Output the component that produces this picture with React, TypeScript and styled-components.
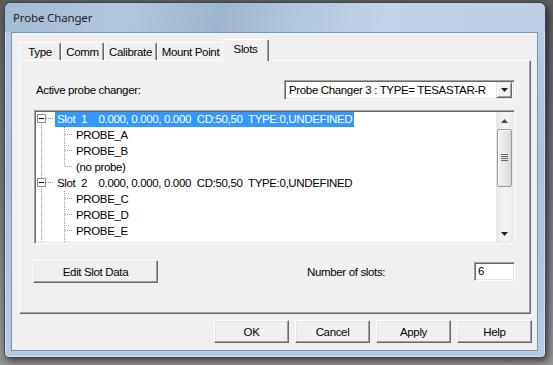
import React from "react";
import styled, { createGlobalStyle } from "styled-components";

const Global = createGlobalStyle`
  html, body { margin: 0; padding: 0; }
  body {
    width: 553px; height: 365px; overflow: hidden;
    font-family: "Liberation Sans", Arial, sans-serif;
    background: #7a7a7a;
  }
`;

const Screen = styled.div`
  width: 553px;
  height: 365px;
  box-sizing: border-box;
  padding: 2px 0 0 4px;
  background: linear-gradient(180deg, #5c5c5c 0%, #777 55%, #959595 100%);
`;

const Window = styled.div`
  width: 542px;
  height: 356px;
  box-sizing: border-box;
  border: 1px solid #3b4754;
  border-radius: 7px 7px 5px 5px;
  background: linear-gradient(180deg, #b9cde2 0%, #aac1d9 45%, #b6cbe0 100%);
  box-shadow: inset 0 0 0 1px rgba(255, 255, 255, 0.45), 2px 3px 7px rgba(0, 0, 0, 0.6);
  display: flex;
  flex-direction: column;
  overflow: hidden;
`;

const TitleBar = styled.div`
  height: 29px;
  flex: none;
  display: flex;
  align-items: center;
  padding-left: 8px;
  background: linear-gradient(
    100deg,
    #a3bbd4 0%,
    #b3c7dc 22%,
    #9db5ce 40%,
    #b0c5db 52%,
    #c1d3e6 70%,
    #bccfe3 100%
  );
`;

const Title = styled.span`
  font-family: "Noto Sans", "Open Sans", sans-serif;
  font-size: 11.5px;
  color: #1e1e1e;
  letter-spacing: -0.15px;
`;

const Client = styled.div`
  margin: 0 7px 0 6px;
  height: 319px;
  box-sizing: border-box;
  border: 1px solid #7f92a7;
  background: #f0f0f0;
  display: flex;
  flex-direction: column;
  font-size: 11.5px;
  letter-spacing: -0.35px;
  color: #000;
`;

const TabStrip = styled.div`
  height: 27px;
  flex: none;
  display: flex;
  align-items: flex-end;
  padding-left: 7px;
`;

const Tab = styled.div<{ $w: number; $active?: boolean }>`
  width: ${(p) => p.$w}px;
  height: ${(p) => (p.$active ? 22 : 18)}px;
  box-sizing: border-box;
  display: flex;
  align-items: center;
  justify-content: center;
  padding-bottom: ${(p) => (p.$active ? 3 : 0)}px;
  margin-left: ${(p) => (p.$active ? -2 : 0)}px;
  margin-bottom: ${(p) => (p.$active ? -1 : 0)}px;
  position: relative;
  z-index: ${(p) => (p.$active ? 2 : 0)};
  background: #f0f0f0;
  border-top: 1px solid #fff;
  border-left: 1px solid #fff;
  border-right: 1px solid #696969;
  border-radius: 2px 2px 0 0;
  box-shadow: inset -1px 0 0 #a0a0a0;
`;

const TabPage = styled.div`
  margin-left: 7px;
  width: 512px;
  height: 254px;
  box-sizing: border-box;
  border-style: solid;
  border-width: 1px;
  border-color: #fff #696969 #696969 #fff;
  box-shadow: inset -1px -1px 0 #a0a0a0;
  padding: 19px 15px 0 14px;
  display: flex;
  flex-direction: column;
`;

const ChangerRow = styled.div`
  height: 20px;
  display: flex;
  align-items: center;
  justify-content: space-between;
`;

const Label = styled.span<{ $indent?: number }>`
  margin-left: ${(p) => p.$indent ?? 0}px;
  white-space: pre;
`;

const Combo = styled.div`
  width: 231px;
  height: 20px;
  box-sizing: border-box;
  display: flex;
  align-items: center;
  background: #fff;
  border-style: solid;
  border-width: 1px;
  border-color: #a0a0a0 #fff #fff #a0a0a0;
  box-shadow: inset 1px 1px 0 #696969, inset -1px -1px 0 #e3e3e3;
  padding: 2px 2px 2px 4px;
`;

const ComboText = styled.span`
  flex: 1;
  white-space: pre;
`;

const ComboButton = styled.div`
  width: 16px;
  height: 16px;
  box-sizing: border-box;
  display: flex;
  align-items: center;
  justify-content: center;
  background: #f0f0f0;
  border-style: solid;
  border-width: 1px;
  border-color: #e3e3e3 #696969 #696969 #e3e3e3;
  box-shadow: inset 1px 1px 0 #fff, inset -1px -1px 0 #a0a0a0;
`;

const Tree = styled.div`
  margin-top: 10px;
  height: 134px;
  box-sizing: border-box;
  display: flex;
  background: #fff;
  border-style: solid;
  border-width: 1px;
  border-color: #a0a0a0 #fff #fff #a0a0a0;
  box-shadow: inset 1px 1px 0 #696969, inset -1px -1px 0 #e3e3e3;
  padding: 0 1px 1px 1px;
`;

const TreeBody = styled.div`
  flex: 1;
  overflow: hidden;
  padding-left: 1px;
`;

const TreeRow = styled.div`
  height: 16px;
  display: flex;
  align-items: center;
`;

const NodeLabel = styled.span<{ $selected?: boolean }>`
  height: 15px;
  line-height: 15px;
  padding: 0 2px;
  white-space: pre;
  background: ${(p) => (p.$selected ? "#3399ff" : "transparent")};
  color: ${(p) => (p.$selected ? "#fff" : "#000")};
`;

const ScrollBar = styled.div`
  width: 17px;
  flex: none;
  margin-top: 1px;
  display: flex;
  flex-direction: column;
  background: linear-gradient(90deg, #e6e6e6 0%, #f4f4f4 50%, #ececec 100%);
`;

const ScrollArrow = styled.div`
  height: 17px;
  flex: none;
  display: flex;
  align-items: center;
  justify-content: center;
`;

const ScrollTrack = styled.div`
  flex: 1;
`;

const Thumb = styled.div`
  margin: 0 1px;
  height: 58px;
  box-sizing: border-box;
  border: 1px solid #999;
  border-radius: 2px;
  background: linear-gradient(90deg, #f2f2f2 0%, #e8e8e8 50%, #d6d6d6 100%);
  box-shadow: inset 1px 1px 0 #fff;
  display: flex;
  align-items: center;
  justify-content: center;
`;

const ControlRow = styled.div`
  margin-top: 16px;
  display: flex;
  align-items: center;
`;

const Button = styled.button<{ $w: number }>`
  width: ${(p) => p.$w}px;
  height: 23px;
  box-sizing: border-box;
  padding: 0;
  font-family: "Liberation Sans", Arial, sans-serif;
  font-size: 11.5px;
  letter-spacing: -0.35px;
  color: #000;
  background: #f0f0f0;
  border-style: solid;
  border-width: 1px;
  border-color: #fff #696969 #696969 #fff;
  box-shadow: inset -1px -1px 0 #a0a0a0, inset 1px 1px 0 #e3e3e3;
  flex: none;
`;

const EditButton = styled(Button)`
  margin-left: -1px;
`;

const NumberBox = styled.div`
  margin-left: auto;
  width: 41px;
  height: 19px;
  box-sizing: border-box;
  background: #fff;
  border-style: solid;
  border-width: 1px;
  border-color: #a0a0a0 #fff #fff #a0a0a0;
  box-shadow: inset 1px 1px 0 #696969, inset -1px -1px 0 #e3e3e3;
  padding: 2px 3px;
  line-height: 13px;
`;

const ButtonRow = styled.div`
  margin-top: 6px;
  display: flex;
  justify-content: flex-end;
  gap: 6px;
  padding-right: 5px;
`;

const dot = { stroke: "#9a9a9a", strokeDasharray: "1 1", shapeRendering: "crispEdges" as const };

function SlotGutter({ first }: { first?: boolean }) {
  return (
    <svg width="18" height="16" viewBox="0 0 18 16" style={{ flex: "none" }}>
      {!first && <line x1="4.5" y1="0" x2="4.5" y2="4" {...dot} />}
      <line x1="4.5" y1="12" x2="4.5" y2="16" {...dot} />
      <line x1="9" y1="7.5" x2="17" y2="7.5" {...dot} />
      <rect x="0.5" y="3.5" width="8" height="8" fill="#fff" stroke="#919191" shapeRendering="crispEdges" />
      <line x1="2" y1="7.5" x2="7" y2="7.5" stroke="#000" shapeRendering="crispEdges" />
    </svg>
  );
}

function ChildGutter({ last }: { last?: boolean }) {
  return (
    <svg width="37" height="16" viewBox="0 0 37 16" style={{ flex: "none" }}>
      <line x1="4.5" y1="0" x2="4.5" y2="16" {...dot} />
      <line x1="27.5" y1="0" x2="27.5" y2={last ? 8 : 16} {...dot} />
      <line x1="28" y1="7.5" x2="35" y2="7.5" {...dot} />
    </svg>
  );
}

function Triangle({ dir }: { dir: "up" | "down" }) {
  return (
    <svg width="7" height="4" viewBox="0 0 7 4">
      {dir === "down" ? (
        <path d="M0 0H7L3.5 4Z" fill="#222" />
      ) : (
        <path d="M0 4H7L3.5 0Z" fill="#4a4a4a" />
      )}
    </svg>
  );
}

function Grip() {
  return (
    <svg width="7" height="8" viewBox="0 0 7 8">
      {[0, 2, 4, 6].map((y) => (
        <line key={y} x1="0" y1={y + 0.5} x2="7" y2={y + 0.5} stroke="#6d6d6d" shapeRendering="crispEdges" />
      ))}
    </svg>
  );
}

const slots = [
  { label: "Slot  1    0.000, 0.000, 0.000  CD:50,50  TYPE:0,UNDEFINED", probes: ["PROBE_A", "PROBE_B", "(no probe)"] },
  { label: "Slot  2    0.000, 0.000, 0.000  CD:50,50  TYPE:0,UNDEFINED", probes: ["PROBE_C", "PROBE_D", "PROBE_E", "(no probe)"] },
];

const tabs = [
  { name: "Type", w: 42 },
  { name: "Comm", w: 43 },
  { name: "Calibrate", w: 53 },
  { name: "Mount Point", w: 67 },
  { name: "Slots", w: 47, active: true },
];

export default function App() {
  return (
    <>
      <Global />
      <Screen>
        <Window>
          <TitleBar>
            <Title>Probe Changer</Title>
          </TitleBar>
          <Client>
            <TabStrip>
              {tabs.map((t) => (
                <Tab key={t.name} $w={t.w} $active={t.active}>
                  {t.name}
                </Tab>
              ))}
            </TabStrip>
            <TabPage>
              <ChangerRow>
                <Label $indent={2}>Active probe changer:</Label>
                <Combo>
                  <ComboText>Probe Changer 3 : TYPE= TESASTAR-R</ComboText>
                  <ComboButton>
                    <Triangle dir="down" />
                  </ComboButton>
                </Combo>
              </ChangerRow>
              <Tree>
                <TreeBody>
                  {slots.map((s, i) => (
                    <React.Fragment key={s.label}>
                      <TreeRow>
                        <SlotGutter first={i === 0} />
                        <NodeLabel $selected={i === 0}>{s.label}</NodeLabel>
                      </TreeRow>
                      {s.probes.map((p, j) => (
                        <TreeRow key={p + j}>
                          <ChildGutter last={j === s.probes.length - 1} />
                          <NodeLabel>{p}</NodeLabel>
                        </TreeRow>
                      ))}
                    </React.Fragment>
                  ))}
                </TreeBody>
                <ScrollBar>
                  <ScrollArrow>
                    <Triangle dir="up" />
                  </ScrollArrow>
                  <ScrollTrack>
                    <Thumb>
                      <Grip />
                    </Thumb>
                  </ScrollTrack>
                  <ScrollArrow>
                    <Triangle dir="down" />
                  </ScrollArrow>
                </ScrollBar>
              </Tree>
              <ControlRow>
                <EditButton $w={125}>Edit Slot Data</EditButton>
                <Label $indent={149}>Number of slots:</Label>
                <NumberBox>6</NumberBox>
              </ControlRow>
            </TabPage>
            <ButtonRow>
              <Button $w={75}>OK</Button>
              <Button $w={75}>Cancel</Button>
              <Button $w={75}>Apply</Button>
              <Button $w={75}>Help</Button>
            </ButtonRow>
          </Client>
        </Window>
      </Screen>
    </>
  );
}
